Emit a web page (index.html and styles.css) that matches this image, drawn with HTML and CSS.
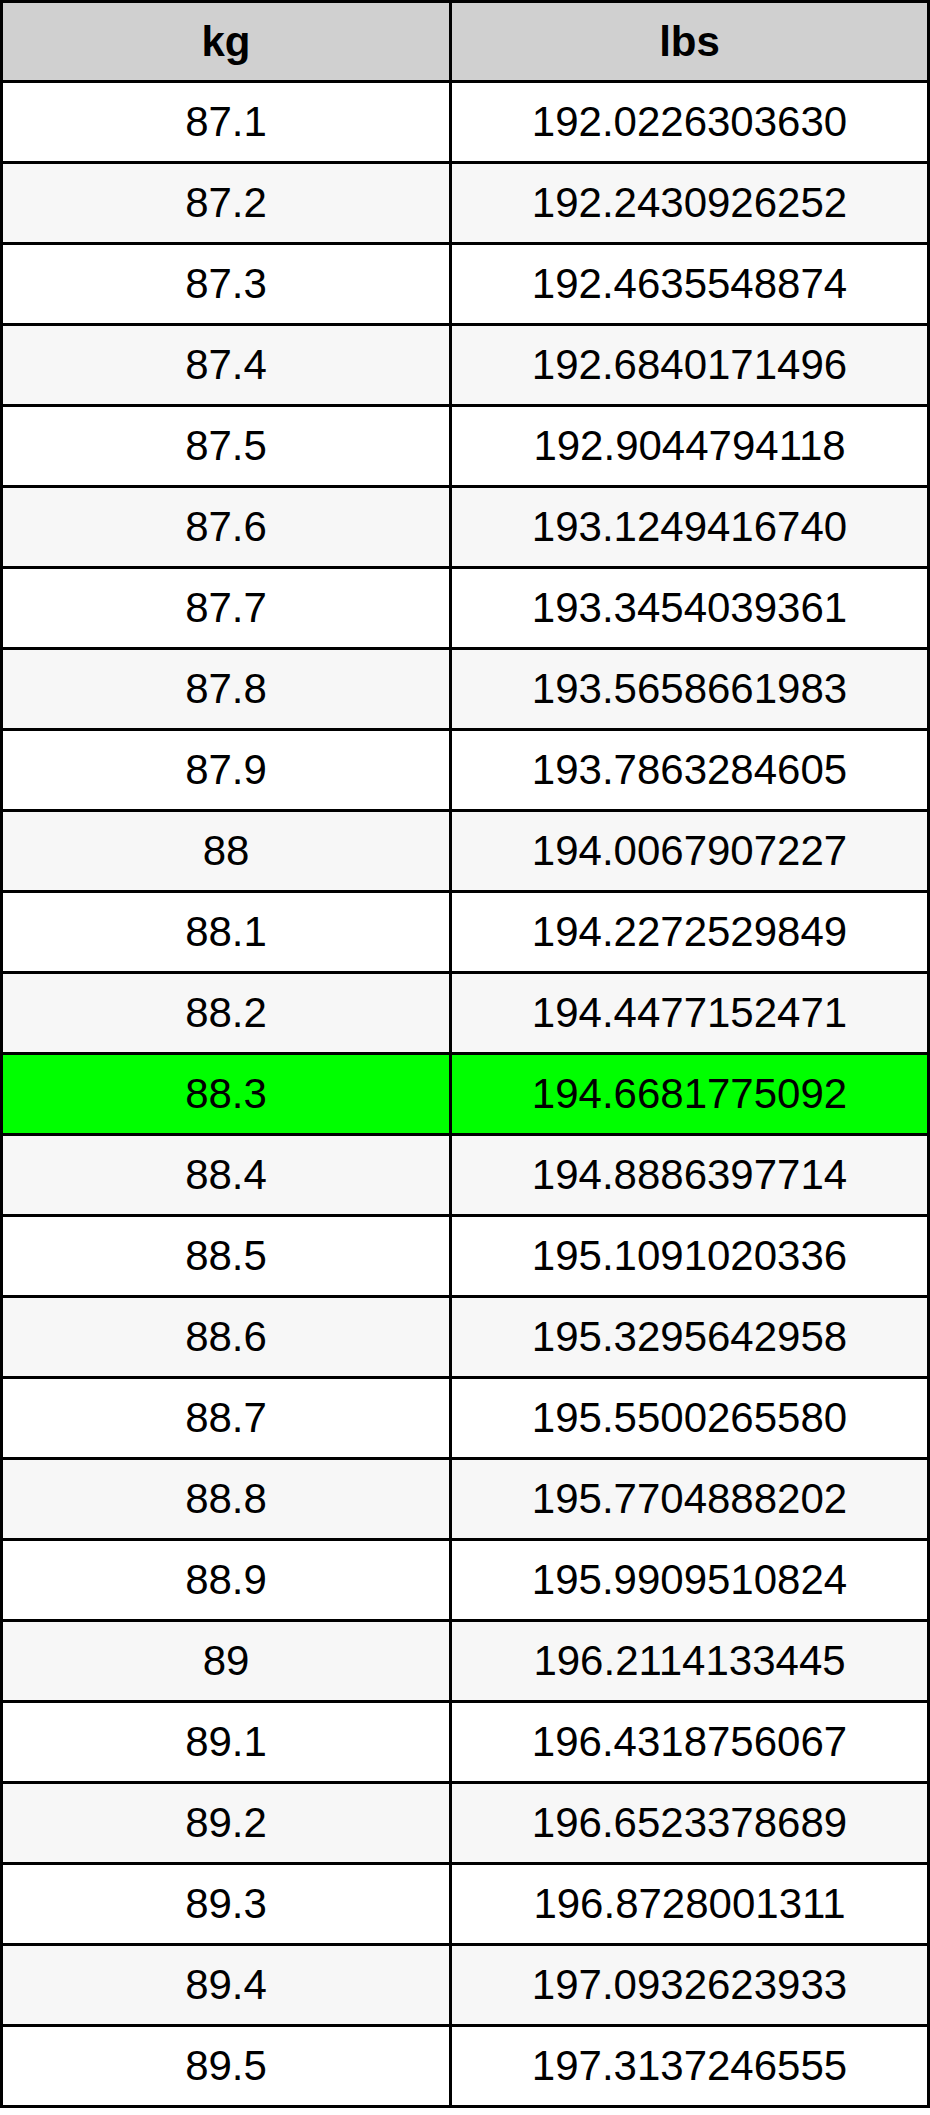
FILE: index.html
```html
<!DOCTYPE html>
<html>
<head>
<meta charset="utf-8">
<link rel="stylesheet" href="styles.css">
</head>
<body>
<table class="conv">
<colgroup><col class="c1"><col class="c2"></colgroup>
<thead>
<tr><th>kg</th><th>lbs</th></tr>
</thead>
<tbody>
<tr><td>87.1</td><td>192.0226303630</td></tr>
<tr class="alt"><td>87.2</td><td>192.2430926252</td></tr>
<tr><td>87.3</td><td>192.4635548874</td></tr>
<tr class="alt"><td>87.4</td><td>192.6840171496</td></tr>
<tr><td>87.5</td><td>192.9044794118</td></tr>
<tr class="alt"><td>87.6</td><td>193.1249416740</td></tr>
<tr><td>87.7</td><td>193.3454039361</td></tr>
<tr class="alt"><td>87.8</td><td>193.5658661983</td></tr>
<tr><td>87.9</td><td>193.7863284605</td></tr>
<tr class="alt"><td>88</td><td>194.0067907227</td></tr>
<tr><td>88.1</td><td>194.2272529849</td></tr>
<tr class="alt"><td>88.2</td><td>194.4477152471</td></tr>
<tr class="hl"><td>88.3</td><td>194.6681775092</td></tr>
<tr class="alt"><td>88.4</td><td>194.8886397714</td></tr>
<tr><td>88.5</td><td>195.1091020336</td></tr>
<tr class="alt"><td>88.6</td><td>195.3295642958</td></tr>
<tr><td>88.7</td><td>195.5500265580</td></tr>
<tr class="alt"><td>88.8</td><td>195.7704888202</td></tr>
<tr><td>88.9</td><td>195.9909510824</td></tr>
<tr class="alt"><td>89</td><td>196.2114133445</td></tr>
<tr><td>89.1</td><td>196.4318756067</td></tr>
<tr class="alt"><td>89.2</td><td>196.6523378689</td></tr>
<tr><td>89.3</td><td>196.8728001311</td></tr>
<tr class="alt"><td>89.4</td><td>197.0932623933</td></tr>
<tr><td>89.5</td><td>197.3137246555</td></tr>
</tbody>
</table>
</body>
</html>
```
FILE: styles.css
```css
html, body {
  margin: 0;
  padding: 0;
  background: #ffffff;
}
.conv {
  width: 930px;
  table-layout: fixed;
  border-collapse: separate;
  border-spacing: 0;
  border-top: 3px solid #000;
  border-left: 3px solid #000;
  font-family: "Liberation Sans", Arial, sans-serif;
  font-size: 42px;
  color: #000;
}
.c1 { width: 449px; }
.c2 { width: 478px; }
.conv th, .conv td {
  border-right: 3px solid #000;
  border-bottom: 3px solid #000;
  padding: 0;
  text-align: center;
  vertical-align: middle;
  box-sizing: border-box;
}
.conv th {
  height: 80px;
  background: #d0d0d0;
  font-weight: bold;
}
.conv td {
  height: 81px;
  background: #ffffff;
}
.conv tr.alt td {
  background: #f7f7f7;
}
.conv tr.hl td {
  background: #00ff00;
}
```
